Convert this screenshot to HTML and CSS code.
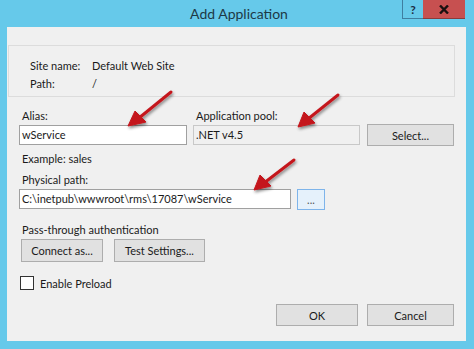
FILE: index.html
```html
<!DOCTYPE html>
<html lang="en">
<head>
<meta charset="UTF-8">
<meta name="viewport" content="width=device-width, initial-scale=1.0">
<title>Add Application</title>
<link rel="stylesheet" href="styles.css">
</head>
<body>
  <div class="window">
    <div class="titlebar">
      <span class="title">Add Application</span>
      <div class="controls">
        <span class="ctl help">?</span>
        <span class="ctl close">
          <svg width="10" height="9" viewBox="0 0 10 9"><path d="M1 0.5 L9 8.5 M9 0.5 L1 8.5" stroke="#1a1010" stroke-width="2.4"/></svg>
        </span>
      </div>
    </div>
    <div class="panel">
      <div class="groupbox">
        <div class="info-row"><span class="info-label">Site name:</span><span>Default Web Site</span></div>
        <div class="info-row"><span class="info-label">Path:</span><span>/</span></div>
      </div>

      <div class="alias-row">
        <div class="field alias">
          <label>Alias:</label>
          <div class="input">wService</div>
        </div>
        <div class="field pool">
          <label>Application pool:</label>
          <div class="input readonly">.NET v4.5</div>
        </div>
        <button class="btn select">Select...</button>
      </div>
      <div class="hint">Example: sales</div>

      <div class="field path">
        <label>Physical path:</label>
        <div class="path-row">
          <div class="input path-input">C:\inetpub\wwwroot\rms\17087\wService</div>
          <button class="btn browse">...</button>
        </div>
      </div>

      <div class="auth">
        <div class="auth-title">Pass-through authentication</div>
        <div class="auth-buttons">
          <button class="btn connect">Connect as...</button>
          <button class="btn test">Test Settings...</button>
        </div>
      </div>

      <div class="preload">
        <span class="checkbox"></span>
        <span>Enable Preload</span>
      </div>

      <div class="footer">
        <button class="btn ok">OK</button>
        <button class="btn cancel">Cancel</button>
      </div>
    </div>

    <svg class="arrows" width="474" height="349" viewBox="0 0 474 349">
      <defs>
        <filter id="shadow" x="-20%" y="-20%" width="140%" height="140%">
          <feDropShadow dx="1" dy="2" stdDeviation="1.5" flood-color="#000" flood-opacity="0.45"/>
        </filter>
      </defs>
      <g fill="#c4161c" stroke="#c4161c" filter="url(#shadow)">
        <line x1="171" y1="92" x2="139" y2="118" stroke-width="3" stroke-linecap="round"/>
        <polygon points="128,126 135,111 146,122" stroke-width="1"/>
        <line x1="338" y1="95" x2="308" y2="119" stroke-width="3" stroke-linecap="round"/>
        <polygon points="298,127 304,112 315,123" stroke-width="1"/>
        <line x1="294" y1="160" x2="264" y2="183" stroke-width="3" stroke-linecap="round"/>
        <polygon points="254,190 260,175 271,186" stroke-width="1"/>
      </g>
    </svg>
  </div>
</body>
</html>
```

FILE: styles.css
```css
body {
  margin: 0;
  padding: 0;
  font-family: Lato, "Noto Sans", sans-serif;
  font-size: 11px;
  color: #1a1a1a;
  background-color: #66c9ea;
}

.window {
  position: relative;
  width: 474px;
  height: 349px;
  background-color: #66c9ea;
  padding: 0 8px 8px 7px;
  box-sizing: border-box;
}

.titlebar {
  height: 27px;
  display: flex;
  justify-content: center;
  align-items: center;
}

.title {
  font-size: 14px;
  color: #1d3946;
  margin-left: 5px;
}

.controls {
  position: absolute;
  top: 0;
  right: 9px;
  display: flex;
}

.ctl {
  height: 19px;
  display: flex;
  align-items: center;
  justify-content: center;
  font-weight: bold;
  color: #111;
  box-sizing: border-box;
}

.help {
  width: 21px;
  border: 1px solid #3f7ea0;
  border-top: none;
  border-right: none;
  font-size: 12px;
  color: #1c2c44;
}

.close {
  width: 42px;
  background-color: #c75050;
  border-bottom: 1px solid #8c3a3a;
}

.panel {
  height: 314px;
  background-color: #f0f0f0;
  padding: 18px 12px 0 12px;
  box-sizing: border-box;
}

.groupbox {
  margin-left: -11px;
  margin-right: -1px;
  height: 52px;
  border: 1px solid #dcdcdc;
  box-sizing: border-box;
  padding: 10px 0 0 21px;
}

.info-row {
  display: flex;
  height: 18px;
  align-items: center;
}

.info-label {
  width: 62px;
}

.alias-row {
  display: flex;
  align-items: flex-end;
  margin-top: 10px;
}

.field label {
  display: block;
  padding-left: 3px;
  height: 18px;
  line-height: 18px;
}

.input {
  height: 20px;
  background-color: #fff;
  border: 1px solid #a0a0a0;
  box-sizing: border-box;
  padding: 0 2px;
  line-height: 18px;
  white-space: nowrap;
  overflow: hidden;
}

.input.readonly {
  background-color: #f0f0f0;
  border-color: #c8c8c8;
}

.alias .input {
  width: 168px;
}

.pool {
  margin-left: 6px;
}

.pool .input {
  width: 167px;
}

.btn {
  font-family: inherit;
  font-size: 11px;
  color: #1a1a1a;
  background-color: #e1e1e1;
  border: 1px solid #adadad;
  height: 22px;
  padding: 0;
  box-sizing: border-box;
}

.select {
  width: 88px;
  margin-left: 7px;
  margin-bottom: -1px;
}

.hint {
  padding-left: 3px;
  margin-top: 5px;
  height: 18px;
  line-height: 18px;
}

.path {
  margin-top: 3px;
}

.path-row {
  display: flex;
}

.path-input {
  width: 272px;
}

.browse {
  width: 28px;
  height: 21px;
  margin-left: 6px;
  color: #555;
  border-color: #7eb4ea;
  background-color: #e5f1fb;
}

.auth {
  margin-top: 11px;
}

.auth-title {
  padding-left: 3px;
  height: 18px;
  line-height: 18px;
}

.auth-buttons {
  display: flex;
  gap: 11px;
  padding-left: 2px;
  margin-top: 0;
}

.connect {
  width: 82px;
  height: 23px;
}

.test {
  width: 91px;
  height: 23px;
}

.preload {
  display: flex;
  align-items: center;
  gap: 6px;
  margin-top: 14px;
  padding-left: 1px;
}

.checkbox {
  width: 12px;
  height: 12px;
  border: 1px solid #333;
  background-color: #fff;
}

.footer {
  display: flex;
  justify-content: flex-end;
  gap: 9px;
  margin-top: 14px;
}

.ok {
  width: 82px;
}

.cancel {
  width: 87px;
}

.arrows {
  position: absolute;
  top: 0;
  left: 0;
  pointer-events: none;
}
```
